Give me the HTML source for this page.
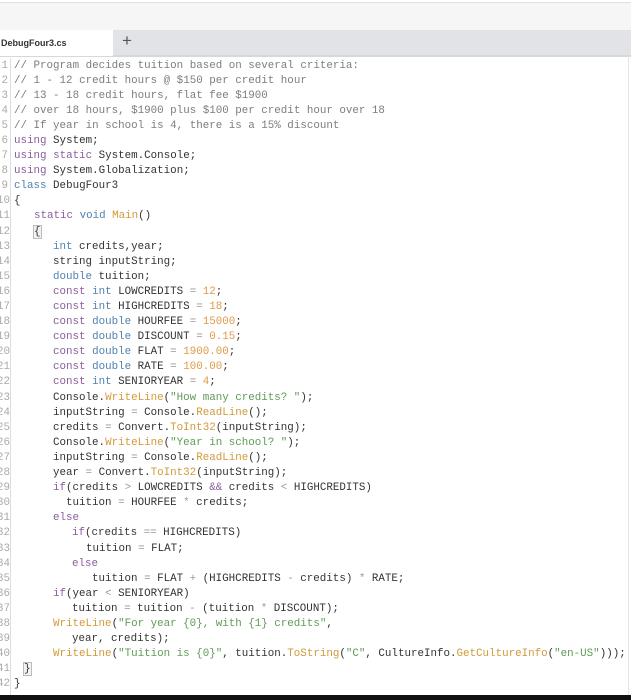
<!DOCTYPE html>
<html><head><meta charset="utf-8"><style>
html,body{margin:0;padding:0;width:631px;height:700px;overflow:hidden;background:#fff;}
.top{position:absolute;left:0;top:2px;width:631px;height:28px;background:#f6f6f6;border-top:1px solid #e0e0e0;}
.tabbar{position:absolute;left:0;top:30px;width:631px;height:25px;background:#e1e3e6;border-bottom:2px solid #d6d8db;}
.tab{position:absolute;left:0;top:30px;width:113px;height:26px;background:#fff;font:600 9px "Liberation Sans",sans-serif;color:#333;line-height:26px;padding-left:1px;box-sizing:border-box;}
.plus{position:absolute;left:122px;top:31px;font:300 17px "Liberation Sans",sans-serif;color:#555;}
.gutter{position:absolute;left:10px;top:58px;width:1px;height:637px;background:#ddd;}
.code{position:absolute;left:0;top:58.5px;width:631px;font:10.85px/15.1px "Liberation Mono",monospace;color:#333;}
.l{height:15.1px;position:relative;display:block;}
.n{position:absolute;left:-3px;width:11px;text-align:right;color:#aaa;}
.t{position:absolute;left:14px;white-space:pre;}
.c{color:#7d7d7d}.k{color:#8a5c9e}.y{color:#4f82b0}.m{color:#d29a3a}.s{color:#5f9c56}.d{color:#e09a4a}.o{color:#999}
.br{outline:1px solid #bbb;background:#f2f2f2}
.bottom{position:absolute;left:0;top:695px;width:631px;height:5px;background:#111;}
.right{position:absolute;left:628px;top:56px;width:1px;height:639px;background:#e4e4e4;}
</style></head><body>
<div class="top"></div>
<div class="tabbar"></div>
<div class="tab">DebugFour3.cs</div>
<div class="plus">+</div>
<div class="gutter"></div>
<div class="right"></div>
<div class="code"><div class="l"><span class="n">1</span><span class="t c">// Program decides tuition based on several criteria:</span></div><div class="l"><span class="n">2</span><span class="t c">// 1 - 12 credit hours @ $150 per credit hour</span></div><div class="l"><span class="n">3</span><span class="t c">// 13 - 18 credit hours, flat fee $1900</span></div><div class="l"><span class="n">4</span><span class="t c">// over 18 hours, $1900 plus $100 per credit hour over 18</span></div><div class="l"><span class="n">5</span><span class="t c">// If year in school is 4, there is a 15% discount</span></div><div class="l"><span class="n">6</span><span class="t"><span class="k">using</span> System;</span></div><div class="l"><span class="n">7</span><span class="t"><span class="k">using</span> <span class="k">static</span> System.Console;</span></div><div class="l"><span class="n">8</span><span class="t"><span class="k">using</span> System.Globalization;</span></div><div class="l"><span class="n">9</span><span class="t"><span class="y">class</span> DebugFour3</span></div><div class="l"><span class="n">10</span><span class="t">{</span></div><div class="l"><span class="n">11</span><span class="t" style="left:34px"><span class="k">static</span> <span class="y">void</span> <span class="m">Main</span>()</span></div><div class="l"><span class="n">12</span><span class="t" style="left:34px"><span class="br">{</span></span></div><div class="l"><span class="n">13</span><span class="t" style="left:53px"><span class="y">int</span> credits,year;</span></div><div class="l"><span class="n">14</span><span class="t" style="left:53px">string inputString;</span></div><div class="l"><span class="n">15</span><span class="t" style="left:53px"><span class="y">double</span> tuition;</span></div><div class="l"><span class="n">16</span><span class="t" style="left:53px"><span class="k">const</span> <span class="y">int</span> LOWCREDITS <span class="o">=</span> <span class="d">12</span>;</span></div><div class="l"><span class="n">17</span><span class="t" style="left:53px"><span class="k">const</span> <span class="y">int</span> HIGHCREDITS <span class="o">=</span> <span class="d">18</span>;</span></div><div class="l"><span class="n">18</span><span class="t" style="left:53px"><span class="k">const</span> <span class="y">double</span> HOURFEE <span class="o">=</span> <span class="d">15000</span>;</span></div><div class="l"><span class="n">19</span><span class="t" style="left:53px"><span class="k">const</span> <span class="y">double</span> DISCOUNT <span class="o">=</span> <span class="d">0.15</span>;</span></div><div class="l"><span class="n">20</span><span class="t" style="left:53px"><span class="k">const</span> <span class="y">double</span> FLAT <span class="o">=</span> <span class="d">1900.00</span>;</span></div><div class="l"><span class="n">21</span><span class="t" style="left:53px"><span class="k">const</span> <span class="y">double</span> RATE <span class="o">=</span> <span class="d">100.00</span>;</span></div><div class="l"><span class="n">22</span><span class="t" style="left:53px"><span class="k">const</span> <span class="y">int</span> SENIORYEAR <span class="o">=</span> <span class="d">4</span>;</span></div><div class="l"><span class="n">23</span><span class="t" style="left:53px">Console.<span class="m">WriteLine</span>(<span class="s">"How many credits? "</span>);</span></div><div class="l"><span class="n">24</span><span class="t" style="left:53px">inputString <span class="o">=</span> Console.<span class="m">ReadLine</span>();</span></div><div class="l"><span class="n">25</span><span class="t" style="left:53px">credits <span class="o">=</span> Convert.<span class="m">ToInt32</span>(inputString);</span></div><div class="l"><span class="n">26</span><span class="t" style="left:53px">Console.<span class="m">WriteLine</span>(<span class="s">"Year in school? "</span>);</span></div><div class="l"><span class="n">27</span><span class="t" style="left:53px">inputString <span class="o">=</span> Console.<span class="m">ReadLine</span>();</span></div><div class="l"><span class="n">28</span><span class="t" style="left:53px">year <span class="o">=</span> Convert.<span class="m">ToInt32</span>(inputString);</span></div><div class="l"><span class="n">29</span><span class="t" style="left:53px"><span class="k">if</span>(credits <span class="o">&gt;</span> LOWCREDITS <span class="k">&amp;&amp;</span> credits <span class="o">&lt;</span> HIGHCREDITS)</span></div><div class="l"><span class="n">30</span><span class="t" style="left:66px">tuition <span class="o">=</span> HOURFEE <span class="o">*</span> credits;</span></div><div class="l"><span class="n">31</span><span class="t" style="left:53px"><span class="k">else</span></span></div><div class="l"><span class="n">32</span><span class="t" style="left:72px"><span class="k">if</span>(credits <span class="o">==</span> HIGHCREDITS)</span></div><div class="l"><span class="n">33</span><span class="t" style="left:86px">tuition <span class="o">=</span> FLAT;</span></div><div class="l"><span class="n">34</span><span class="t" style="left:72px"><span class="k">else</span></span></div><div class="l"><span class="n">35</span><span class="t" style="left:92px">tuition <span class="o">=</span> FLAT <span class="o">+</span> (HIGHCREDITS <span class="o">-</span> credits) <span class="o">*</span> RATE;</span></div><div class="l"><span class="n">36</span><span class="t" style="left:53px"><span class="k">if</span>(year <span class="o">&lt;</span> SENIORYEAR)</span></div><div class="l"><span class="n">37</span><span class="t" style="left:72px">tuition <span class="o">=</span> tuition <span class="o">-</span> (tuition <span class="o">*</span> DISCOUNT);</span></div><div class="l"><span class="n">38</span><span class="t" style="left:53px"><span class="m">WriteLine</span>(<span class="s">"For year {0}, with {1} credits"</span>,</span></div><div class="l"><span class="n">39</span><span class="t" style="left:72px">year, credits);</span></div><div class="l"><span class="n">40</span><span class="t" style="left:53px"><span class="m">WriteLine</span>(<span class="s">"Tuition is {0}"</span>, tuition.<span class="m">ToString</span>(<span class="s">"C"</span>, CultureInfo.<span class="m">GetCultureInfo</span>(<span class="s">"en-US"</span>)));</span></div><div class="l"><span class="n">41</span><span class="t" style="left:24px"><span class="br">}</span></span></div><div class="l"><span class="n">42</span><span class="t">}</span></div></div>
<div class="bottom"></div>
</body></html>
